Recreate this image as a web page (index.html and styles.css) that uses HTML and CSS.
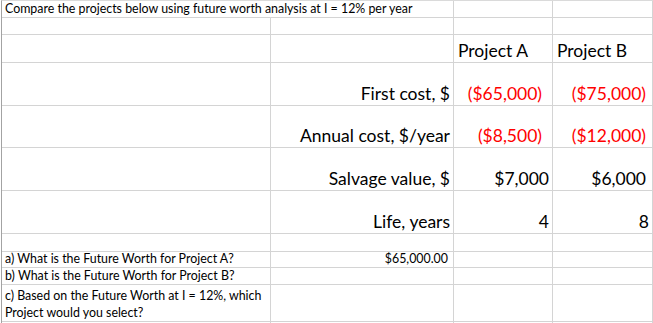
FILE: index.html
```html
<!DOCTYPE html>
<html>
<head>
<meta charset="utf-8">
<link rel="stylesheet" href="styles.css">
</head>
<body>
<div class="sheet">
  <div class="cell small span2 r0">Compare the projects below using future worth analysis at I = 12% per year</div>
  <div class="cell r0"></div>
  <div class="cell r0"></div>

  <div class="cell r1"></div><div class="cell r1"></div><div class="cell r1"></div><div class="cell r1"></div>

  <div class="cell r2"></div><div class="cell r2"></div>
  <div class="cell big left r2">Project A</div>
  <div class="cell big left r2">Project B</div>

  <div class="cell r3"></div>
  <div class="cell big right r3">First cost, $</div>
  <div class="cell big right neg r3">($65,000)</div>
  <div class="cell big right neg negd r3">($75,000)</div>

  <div class="cell r4"></div>
  <div class="cell big right r4">Annual cost, $/year</div>
  <div class="cell big right neg r4">($8,500)</div>
  <div class="cell big right neg negd r4">($12,000)</div>

  <div class="cell r5"></div>
  <div class="cell big right r5">Salvage value, $</div>
  <div class="cell big right r5">$7,000</div>
  <div class="cell big right posd r5">$6,000</div>

  <div class="cell r6"></div>
  <div class="cell big right r6">Life, years</div>
  <div class="cell big right r6">4</div>
  <div class="cell big right r6">8</div>

  <div class="cell r7"></div><div class="cell r7"></div><div class="cell r7"></div><div class="cell r7"></div>

  <div class="cell small r8">a) What is the Future Worth for Project A?</div>
  <div class="cell small right amount r8">$65,000.00</div>
  <div class="cell r8"></div><div class="cell r8"></div>

  <div class="cell small r9">b) What is the Future Worth for Project B?</div>
  <div class="cell r9"></div><div class="cell r9"></div><div class="cell r9"></div>

  <div class="cell small wrap r10">c) Based on the Future Worth at I = 12%, which Project would you select?</div>
  <div class="cell r10"></div><div class="cell r10"></div><div class="cell r10"></div>

  <div class="cell r11"></div><div class="cell r11"></div><div class="cell r11"></div><div class="cell r11"></div>
</div>
</body>
</html>
```

FILE: styles.css
```css
html, body {
  margin: 0;
  padding: 0;
  background: #ffffff;
}

.sheet {
  margin-left: 1px;
  border-left: 1px solid #a3a3a3;
  border-top: 1px solid #dadada;
  display: grid;
  grid-template-columns: 269px 183px 99px 100px;
  grid-template-rows: 17px 17px 28px 43px 42px 43px 43px 18px 16px 17px 37px 10px;
  font-family: Lato, "Open Sans", sans-serif;
  color: #000000;
}

.cell {
  box-sizing: border-box;
  border-right: 1px solid #d4d4d4;
  border-bottom: 1px solid #d4d4d4;
  display: flex;
  align-items: flex-end;
  white-space: nowrap;
  overflow: visible;
  padding: 0 3px 0 3px;
}

.span2 {
  grid-column: span 2;
}

.small {
  font-size: 12.4px;
  line-height: 16px;
}

.big {
  font-size: 17.5px;
  line-height: 22px;
  padding-bottom: 0;
}

.left {
  justify-content: flex-start;
  padding-left: 4px;
}

.right {
  justify-content: flex-end;
  padding-right: 3px;
}

.amount {
  padding-right: 5px;
}

.neg {
  color: #ff0000;
  padding-right: 10px;
}

.negd {
  padding-right: 6px;
}

.posd {
  padding-right: 6px;
}

.wrap {
  white-space: normal;
  align-items: flex-start;
  line-height: 17px;
  padding-top: 2px;
}
```
